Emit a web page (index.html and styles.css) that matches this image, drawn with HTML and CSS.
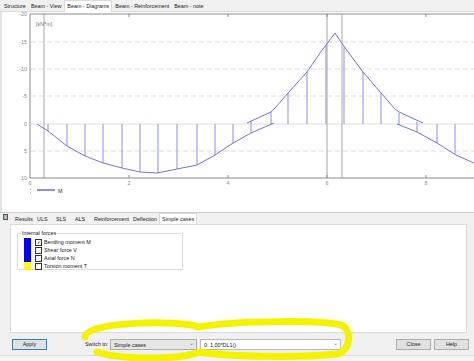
FILE: index.html
```html
<!DOCTYPE html>
<html lang="en">
<head>
    <meta charset="UTF-8">
    <title>Beam - Diagrams</title>
    <link rel="stylesheet" href="styles.css">
</head>
<body>
    <div class="window">
        <div class="top-tabs">
            <span class="tab">Structure</span>
            <span class="tab">Beam - View</span>
            <span class="tab active">Beam - Diagrams</span>
            <span class="tab">Beam - Reinforcement</span>
            <span class="tab">Beam - note</span>
        </div>

        <div class="chart">
            <svg width="474" height="200" viewBox="0 12 474 200">
                <!-- grid -->
                <g class="grid-dash">
                    <line x1="31" y1="42" x2="474" y2="42"/>
                    <line x1="31" y1="69" x2="474" y2="69"/>
                    <line x1="31" y1="96" x2="474" y2="96"/>
                    <line x1="31" y1="151" x2="474" y2="151"/>
                </g>
                <line class="grid-zero" x1="31" y1="124" x2="474" y2="124"/>

                <!-- supports -->
                <g class="support">
                    <line x1="44" y1="14" x2="44" y2="178"/>
                    <line x1="327" y1="14" x2="327" y2="178"/>
                    <line x1="342" y1="14" x2="342" y2="178"/>
                </g>

                <!-- axes -->
                <g class="axis">
                    <line x1="30" y1="14" x2="474" y2="14"/>
                    <line x1="30" y1="178" x2="474" y2="178"/>
                    <line x1="30" y1="14" x2="30" y2="178"/>
                    <line x1="129" y1="14" x2="129" y2="17"/>
                    <line x1="228" y1="14" x2="228" y2="17"/>
                    <line x1="327" y1="14" x2="327" y2="17"/>
                    <line x1="426" y1="14" x2="426" y2="17"/>
                    <line x1="129" y1="175" x2="129" y2="178"/>
                    <line x1="228" y1="175" x2="228" y2="178"/>
                    <line x1="327" y1="175" x2="327" y2="178"/>
                    <line x1="426" y1="175" x2="426" y2="178"/>
                </g>

                <g class="ylabels">
                    <text x="27" y="16">-20</text>
                    <text x="27" y="44">-15</text>
                    <text x="27" y="71">-10</text>
                    <text x="27" y="98">-5</text>
                    <text x="27" y="126">0</text>
                    <text x="27" y="153">5</text>
                    <text x="27" y="180">10</text>
                </g>
                <g class="xlabels">
                    <text x="30" y="185">0</text>
                    <text x="129" y="185">2</text>
                    <text x="228" y="185">4</text>
                    <text x="327" y="185">6</text>
                    <text x="426" y="185">8</text>
                </g>
                <text class="unit" x="36" y="26">[kN*m]</text>

                <!-- moment M -->
                <g class="hatch">
                    <line x1="48" y1="124" x2="48" y2="131"/>
                    <line x1="67" y1="124" x2="67" y2="146"/>
                    <line x1="85" y1="124" x2="85" y2="156"/>
                    <line x1="103" y1="124" x2="103" y2="163"/>
                    <line x1="122" y1="124" x2="122" y2="168"/>
                    <line x1="140" y1="124" x2="140" y2="172"/>
                    <line x1="158" y1="124" x2="158" y2="173"/>
                    <line x1="177" y1="124" x2="177" y2="169"/>
                    <line x1="197" y1="124" x2="197" y2="165"/>
                    <line x1="215" y1="124" x2="215" y2="155"/>
                    <line x1="233" y1="124" x2="233" y2="143"/>
                    <line x1="251" y1="121" x2="251" y2="133"/>
                    <line x1="271" y1="112" x2="271" y2="124"/>
                    <line x1="288" y1="93" x2="288" y2="124"/>
                    <line x1="307" y1="72" x2="307" y2="124"/>
                    <line x1="326" y1="45" x2="326" y2="124"/>
                    <line x1="344" y1="47" x2="344" y2="124"/>
                    <line x1="363" y1="72" x2="363" y2="124"/>
                    <line x1="381" y1="93" x2="381" y2="124"/>
                    <line x1="399" y1="113" x2="399" y2="125"/>
                    <line x1="417" y1="122" x2="417" y2="132"/>
                    <line x1="437" y1="124" x2="437" y2="143"/>
                    <line x1="455" y1="124" x2="455" y2="154"/>
                </g>
                <g class="curve">
                    <polyline points="37,124 48,131 67,146 85,156 103,163 122,168 140,172 157,173 177,169 197,165 215,155 233,143 251,133 274,123"/>
                    <polyline points="247,123 271,112 275,108 288,93 307,72 320,53 335,33 343,45 363,72 381,93 395,109 399,112 423,123"/>
                    <polyline points="397,124 417,132 437,143 456,155 474,163"/>
                </g>

                <!-- legend -->
                <rect class="legend-mark" x="30" y="188" width="1" height="2"/>
                <rect class="legend-mark" x="30" y="192" width="1" height="2"/>
                <line class="legend-line" x1="37" y1="190" x2="55" y2="190"/>
                <text class="legend-text" x="58" y="193">M</text>
            </svg>
        </div>

        <div class="lower">
            <div class="sub-tabs">
                <span class="split-icon"></span>
                <span class="tab">Results</span>
                <span class="tab short">ULS</span>
                <span class="tab short">SLS</span>
                <span class="tab short">ALS</span>
                <span class="tab">Reinforcement</span>
                <span class="tab">Deflection</span>
                <span class="tab active">Simple cases</span>
            </div>

            <div class="panel">
                <fieldset class="group">
                    <legend>Internal forces</legend>
                    <div class="force-row">
                        <span class="swatch blue"></span>
                        <span class="check checked">&#10003;</span>
                        <span>Bending moment M</span>
                    </div>
                    <div class="force-row">
                        <span class="swatch blue"></span>
                        <span class="check"></span>
                        <span>Shear force V</span>
                    </div>
                    <div class="force-row">
                        <span class="swatch blue"></span>
                        <span class="check"></span>
                        <span>Axial force N</span>
                    </div>
                    <div class="force-row">
                        <span class="swatch yellow"></span>
                        <span class="check"></span>
                        <span>Torsion moment T</span>
                    </div>
                </fieldset>
            </div>

            <div class="button-row">
                <button class="btn apply">Apply</button>
                <span class="switch-label">Switch to:</span>
                <div class="combo gray">Simple cases<span class="arrow">&#8964;</span></div>
                <div class="combo white">0: 1,00*DL1()<span class="arrow">&#8964;</span></div>
                <span class="spacer"></span>
                <button class="btn">Close</button>
                <button class="btn">Help</button>
            </div>
            <div class="status"></div>
        </div>

        <!-- marker highlight drawn over the window -->
        <svg class="highlight" width="474" height="50" viewBox="0 315 474 50">
            <path d="M 85 337 C 86 321, 180 320, 198 327 C 240 320, 330 320, 343 326 C 352 332, 350 350, 338 354 C 300 358, 230 357, 200 352 C 180 360, 120 360, 97 352"/>
        </svg>
    </div>
</body>
</html>
```

FILE: styles.css
```css
body {
    margin: 0;
    font-family: "Liberation Sans", Arial, sans-serif;
    font-size: 5.4px;
    color: #222;
    background-color: #f0f0f0;
}
.window {
    width: 474px;
    height: 361px;
    overflow: hidden;
    position: relative;
    display: flex;
    flex-direction: column;
}
.top-tabs {
    height: 12px;
    display: flex;
    align-items: flex-end;
    padding-left: 2px;
    gap: 1px;
    box-sizing: border-box;
    border-bottom: 1px solid #d9d9d9;
}
.tab {
    height: 10px;
    line-height: 10px;
    padding: 0 2px;
    white-space: nowrap;
}
.tab.active {
    background-color: #fff;
    border: 1px solid #d9d9d9;
    border-bottom: none;
    height: 11px;
    margin-bottom: -1px;
}
.chart {
    height: 200px;
    background-color: #fff;
    border-left: 2px solid #e3e3e3;
    box-sizing: border-box;
}
.chart svg {
    display: block;
    margin-left: -2px;
}
.grid-dash line {
    stroke: #dcdcdc;
    stroke-width: 1;
    stroke-dasharray: 5 3;
}
.grid-zero {
    stroke: #dedede;
}
.support line {
    stroke: #a8a8a8;
    stroke-width: 1;
}
.axis line {
    stroke: #8a8a8a;
    stroke-width: 1;
}
.ylabels text {
    font-size: 5.4px;
    fill: #8a8a8a;
    text-anchor: end;
}
.xlabels text {
    font-size: 5.4px;
    fill: #8a8a8a;
    text-anchor: middle;
}
.unit {
    font-size: 5.4px;
    fill: #777;
}
.hatch line {
    stroke: #8c8cf0;
    stroke-width: 1;
}
.curve polyline {
    fill: none;
    stroke: #7272e0;
    stroke-width: 1;
}
.legend-mark {
    fill: #c8c8c8;
}
.legend-line {
    stroke: #4646cc;
    stroke-width: 1.2;
}
.legend-text {
    font-size: 5.4px;
    fill: #333;
}
.lower {
    flex: 1;
    display: flex;
    flex-direction: column;
    border-top: 1px solid #cfcfcf;
}
.sub-tabs {
    height: 11px;
    display: flex;
    align-items: flex-end;
}
.split-icon {
    width: 3px;
    height: 4px;
    margin: 0 5px 4px 3px;
    border: 1px solid #555;
    background-color: #bbb;
}
.sub-tabs .tab {
    padding: 0 2px;
}
.sub-tabs .tab.short {
    min-width: 15px;
}
.panel {
    height: 109px;
    margin-left: 10px;
    width: 457px;
    background-color: #fff;
    border: 1px solid #dadada;
    box-sizing: border-box;
    padding: 6px 0 0 6px;
}
.group {
    width: 166px;
    height: 39px;
    margin: 0;
    padding: 2px 0 0 6px;
    border: 1px solid #dcdcdc;
    box-sizing: border-box;
}
.group legend {
    padding: 0 1px;
    margin-left: -3px;
    line-height: 5px;
}
.force-row {
    display: flex;
    align-items: center;
    height: 8px;
}
.swatch {
    width: 7px;
    height: 8px;
    margin-right: 4px;
}
.swatch.blue {
    background-color: #0000ff;
}
.swatch.yellow {
    background-color: #ffff00;
}
.check {
    width: 5px;
    height: 5px;
    border: 1px solid #333;
    background-color: #fff;
    margin-right: 2px;
    font-size: 5px;
    line-height: 5px;
    text-align: center;
}
.button-row {
    display: flex;
    align-items: center;
    height: 22px;
    padding: 0 5px 0 12px;
}
.btn {
    height: 11px;
    width: 35px;
    padding: 0;
    font-family: inherit;
    font-size: 5.4px;
    color: #222;
    background-color: #e1e1e1;
    border: 1px solid #adadad;
}
.btn.apply {
    border-color: #2a7fd4;
}
.btn + .btn {
    margin-left: 3px;
}
.switch-label {
    margin-left: 38px;
    width: 25px;
}
.combo {
    position: relative;
    height: 11px;
    line-height: 11px;
    box-sizing: border-box;
    padding-left: 3px;
    border: 1px solid #adadad;
}
.combo.gray {
    width: 87px;
    background-color: #e5e5e5;
}
.combo.white {
    width: 141px;
    margin-left: 3px;
    background-color: #fff;
    border-color: #b9b9b9;
}
.arrow {
    position: absolute;
    right: 2px;
    top: -2px;
    font-size: 6px;
    color: #666;
}
.spacer {
    flex: 1;
}
.status {
    flex: 1;
    border-top: 1px solid #dcdcdc;
    background-color: #f4f4f4;
}
.highlight {
    position: absolute;
    left: 0;
    top: 315px;
    pointer-events: none;
}
.highlight path {
    fill: none;
    stroke: #f3f300;
    stroke-width: 7;
    stroke-linejoin: round;
    stroke-linecap: round;
}
```
